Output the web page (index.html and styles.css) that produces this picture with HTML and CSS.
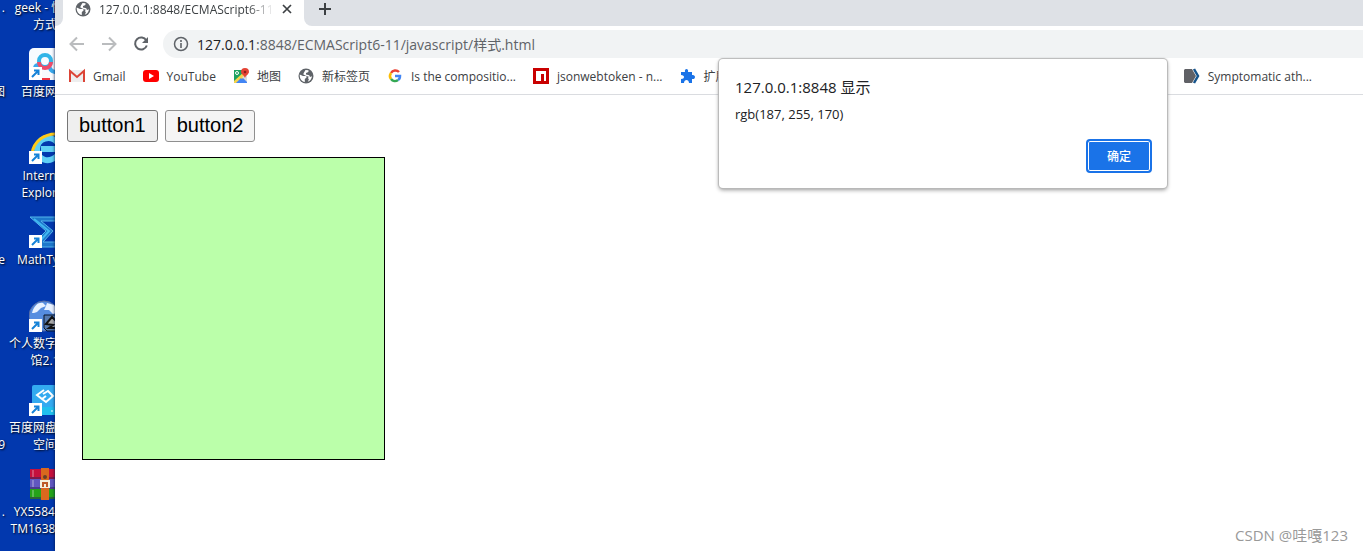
FILE: index.html
```html
<!DOCTYPE html>
<html lang="zh-CN">
<head>
    <meta charset="UTF-8">
    <meta name="viewport" content="width=device-width, initial-scale=1.0">
    <title>样式</title>
    <link rel="stylesheet" href="styles.css">
</head>
<body>
    <!-- Shared symbols -->
    <svg class="symbols" aria-hidden="true">
        <symbol id="globe" viewBox="0 0 16 16">
            <circle cx="8" cy="8" r="7.5" fill="#5f6368"/>
            <path d="M1.7 6.5 L5 8 L7.6 8 C8.6 8 9 9 8.3 9.7 L6.8 11 L6.8 14 C3.8 13.5 1.5 11 1.7 6.5 Z M7.5 2 L10.5 2.3 L10.4 4 L8 5 L8 6.4 L11.2 7.2 L12 9 L14 8.2 C13.8 10.8 12 13 9.7 13.7 L10.9 11.6 L10 10 L10.8 8.8 L7.2 7.4 L5.2 6.2 L6 4.5 Z" fill="#fff"/>
        </symbol>
        <symbol id="shortcut" viewBox="0 0 13 13">
            <path d="M0 0H13V13H0Z" fill="#fff"/>
            <path d="M3 10L9 4M5 3.5H9.5V8" fill="none" stroke="#1683d8" stroke-width="2"/>
        </symbol>
    </svg>

    <div class="desktop">
        <div class="edge"><span>.</span></div>
        <div class="shortcut">
            <svg width="32" height="32"></svg>
            <span>geek - 快捷<br>方式</span>
        </div>

        <div class="edge"><span>图</span></div>
        <div class="shortcut">
            <svg width="32" height="32" viewBox="0 0 32 32">
                <rect width="32" height="32" rx="5" fill="#f8fbff"/>
                <path d="M10 17C5 17 5 22 8 24M20 17C21 25 29 26 31 20" fill="none" stroke="#3aa9ed" stroke-width="4"/>
                <circle cx="16" cy="13" r="6" fill="none" stroke="#32b5e8" stroke-width="4"/>
                <path d="M10 14A6 6 0 0 0 22 14M12 18L10 21" fill="none" stroke="#ee4c6b" stroke-width="4"/>
                <path d="M13 30H21V32H13Z" fill="#ef3340"/>
                <use href="#shortcut" x="0" y="19" width="13" height="13"/>
            </svg>
            <span>百度网盘</span>
        </div>

        <div class="edge"></div>
        <div class="shortcut">
            <svg width="32" height="32" viewBox="0 0 32 32">
                <path d="M30 17H12M29 23C19 33 8 27 8 17C8 6 22 2 29 11" fill="none" stroke="#5fd0f6" stroke-width="6"/>
                <path d="M3 22C4 10 15 1 29 2" fill="none" stroke="#ffcb18" stroke-width="3"/>
                <use href="#shortcut" x="0" y="19" width="13" height="13"/>
            </svg>
            <span>Internet<br>Explorer</span>
        </div>

        <div class="edge"><span>e</span></div>
        <div class="shortcut">
            <svg width="32" height="32" viewBox="0 0 32 32">
                <path d="M1 1H32V5H12L24 15L14 26H32V31H5V27L17 15Z" fill="#1d77cb" stroke="#55b6ed"/>
                <path d="M5 3L20 15L11 25" fill="none" stroke="#3fb7f1" stroke-width="2"/>
                <use href="#shortcut" x="0" y="19" width="13" height="13"/>
            </svg>
            <span>MathType</span>
        </div>

        <div class="edge"></div>
        <div class="shortcut">
            <svg width="32" height="32" viewBox="0 0 32 32">
                <circle cx="15" cy="16" r="15" fill="#568de0" stroke="#5a6da3"/>
                <path d="M3 13C5 5 10 2 14 3L17 6L12 8L8 12L5 13ZM18 3L25 5L29 12L24 14L20 10L15 10L17 6Z" fill="#e8f1ff"/>
                <path d="M15 15H32V31H18L15 28Z" fill="#5579ad" stroke="#07152c"/>
                <path d="M17 24L23 17L28 22L32 22V28H20L24 25Z" fill="#aaa" stroke="#111" stroke-width="2"/>
                <use href="#shortcut" x="0" y="19" width="13" height="13"/>
            </svg>
            <span>个人数字图书<br>馆2.1</span>
        </div>

        <div class="edge"><span><br>9</span></div>
        <div class="shortcut">
            <svg width="32" height="32" viewBox="0 0 32 32">
                <rect x="3" y="1" width="29" height="23" rx="2" fill="#33aaf0"/>
                <rect x="3" y="23" width="29" height="8" fill="#20bfee"/>
                <path d="M15 6L8 11L13 15L17 12M14 10L19 7L24 12L17 18L13 15" fill="none" stroke="#fff" stroke-width="2"/>
                <path d="M22 27H24M26 27H28" stroke="#fff"/>
                <use href="#shortcut" x="0" y="19" width="13" height="13"/>
            </svg>
            <span>百度网盘同步<br>空间</span>
        </div>

        <div class="edge"><span>.</span></div>
        <div class="shortcut">
            <svg width="32" height="32" viewBox="0 0 32 32">
                <rect x="1" y="1" width="31" height="10" fill="#c5103d"/>
                <rect x="1" y="11" width="31" height="10" fill="#6157c0"/>
                <rect x="1" y="21" width="31" height="10" fill="#25a319"/>
                <path d="M1 10H32M1 20H32M1 30H32" stroke="#322559"/>
                <path d="M4 2V9M4 12V19M4 22V29" stroke="#fff" opacity=".5"/>
                <rect x="12" y="0" width="8" height="32" fill="#d9681e"/>
                <circle cx="16" cy="9" r="2" fill="#674029"/>
                <rect x="11" y="12" width="10" height="8" fill="#f4efdc"/>
                <path d="M14 19V15H18V19" fill="none" stroke="#bd5926" stroke-width="2"/>
            </svg>
            <span>YX5584-TM<br>TM1638程序</span>
        </div>
    </div>

    <div class="browser">
        <div class="tab-strip">
            <div class="prev-tab"></div>
            <div class="tab">
                <svg width="16" height="16"><use href="#globe"/></svg>
                <span class="tab-title">127.0.0.1:8848/ECMAScript6-11/javascript</span>
                <button class="icon-button" aria-label="关闭">
                    <svg width="10" height="10" viewBox="0 0 10 10"><path d="M1 1L9 9M9 1L1 9" stroke="#3c4043" stroke-width="1.7"/></svg>
                </button>
            </div>
            <div class="new-tab">
                <button class="icon-button" aria-label="新标签页">
                    <svg width="12" height="12" viewBox="0 0 12 12"><path d="M6 0V12M0 6H12" stroke="#3c4043" stroke-width="2"/></svg>
                </button>
            </div>
        </div>

        <div class="toolbar">
            <button class="icon-button" aria-label="后退">
                <svg width="16" height="16" viewBox="0 0 16 16"><path d="M15 8H2M8 1.5L1.5 8L8 14.5" fill="none" stroke="#babcbe" stroke-width="2"/></svg>
            </button>
            <button class="icon-button" aria-label="前进">
                <svg width="16" height="16" viewBox="0 0 16 16"><path d="M1 8H14M8 1.5L14.5 8L8 14.5" fill="none" stroke="#babcbe" stroke-width="2"/></svg>
            </button>
            <button class="icon-button" aria-label="重新加载">
                <svg width="16" height="16" viewBox="0 0 16 16"><path d="M13.3 4.5A6 6 0 1 0 13.8 9.5" fill="none" stroke="#5f6368" stroke-width="2"/><path d="M15 1V7H9Z" fill="#5f6368"/></svg>
            </button>
            <div class="address">
                <svg width="16" height="16" viewBox="0 0 16 16"><circle cx="8" cy="8" r="6.5" fill="none" stroke="#5f6368" stroke-width="1.5"/><path d="M8 7V12M8 4V6" stroke="#5f6368" stroke-width="1.6"/></svg>
                <span><b>127.0.0.1</b>:8848/ECMAScript6-11/javascript/样式.html</span>
            </div>
        </div>

        <nav class="bookmarks">
            <a href="#">
                <svg width="16" height="16" viewBox="0 0 16 16"><path d="M1 2H15V14H1Z" fill="#eee"/><path d="M1 14V3L8 9L15 3V14" fill="none" stroke="#dc4436" stroke-width="2"/></svg>
                Gmail
            </a>
            <a href="#">
                <svg width="16" height="16" viewBox="0 0 16 16"><rect y="2" width="16" height="12" rx="3" fill="#f00"/><path d="M6 5L11 8L6 11Z" fill="#fff"/></svg>
                YouTube
            </a>
            <a href="#">
                <svg width="16" height="16" viewBox="0 0 16 16">
                    <path d="M1 2H14V15H1Z" fill="#4285f4"/>
                    <path d="M1 2H11L13 5L1 15Z" fill="#1ba261"/>
                    <path d="M1 13L12 3L15 6L4 15H1Z" fill="#f5d34b"/>
                    <path d="M3 15L8 10L13 15Z" fill="#4285f4"/>
                    <path d="M9 9L14 14V7Z" fill="#ddd"/>
                    <path d="M12 10C11 7 8 6 8 4A4 4 0 0 1 16 4C16 6 13 7 12 10Z" fill="#e44335"/>
                    <circle cx="12" cy="4" r="1.3" fill="#8b2118"/>
                    <circle cx="4" cy="5" r="1.5" fill="none" stroke="#fff"/>
                </svg>
                地图
            </a>
            <a href="#">
                <svg width="16" height="16"><use href="#globe"/></svg>
                新标签页
            </a>
            <a href="#">
                <svg width="16" height="16" viewBox="0 0 16 16" fill="none" stroke-width="2.5">
                    <path d="M12 4A5 5 0 0 0 4 5" stroke="#ea4335"/>
                    <path d="M4 5A5 5 0 0 0 4 11" stroke="#fbbc05"/>
                    <path d="M4 11A5 5 0 0 0 11 12" stroke="#34a853"/>
                    <path d="M11 12Q13 11 13 8H8" stroke="#4285f4"/>
                </svg>
                Is the compositio...
            </a>
            <a href="#">
                <svg width="16" height="16" viewBox="0 0 16 16"><path d="M0 0H16V16H0Z" fill="#c90000"/><path d="M3 3H13V13H11V6H8V13H3Z" fill="#fff"/></svg>
                jsonwebtoken - n...
            </a>
            <a href="#">
                <svg width="16" height="16" viewBox="0 0 16 16"><path d="M1 4H5C4 0 9 0 8 4H12V7C16 6 16 12 12 11V15H9C9 11 4 11 4 15H1V11C5 11 5 7 1 7Z" fill="#1a73e8"/></svg>
                扩展
            </a>
            <a href="#" class="last">
                <svg width="16" height="16" viewBox="0 0 16 16"><path d="M0 2L1 1H8L12 8L8 15H1L0 14Z" fill="#606166"/><path d="M10 1L14 8L10 15" fill="none" stroke="#16548b" stroke-width="2.5"/></svg>
                Symptomatic ath...
            </a>
        </nav>

        <main class="page">
            <div class="page-buttons">
                <button>button1</button>
                <button class="light">button2</button>
            </div>
            <div class="box"></div>
        </main>

        <div class="alert" role="alertdialog" aria-labelledby="alert-title" aria-describedby="alert-text">
            <h1 id="alert-title">127.0.0.1:8848 显示</h1>
            <p id="alert-text">rgb(187, 255, 170)</p>
            <button>确定</button>
        </div>

        <div class="watermark">CSDN @哇嘎123</div>
    </div>
</body>
</html>
```

FILE: styles.css
```css
* {
    box-sizing: border-box;
}

body {
    margin: 0;
    min-height: 100vh;
    display: flex;
    overflow: hidden;
    background-color: #0238ae;
    font-family: "Open Sans", "Noto Sans CJK SC", sans-serif;
    font-size: 12px;
    color: #3c4043;
}

button {
    font-family: inherit;
}

svg {
    display: block;
    flex-shrink: 0;
}

.symbols {
    position: absolute;
    width: 0;
    height: 0;
}

/* Desktop icons */
.desktop {
    flex: 0 0 55px;
    min-width: 0;
    height: 100vh;
    margin-top: -36px;
    display: grid;
    grid-template-columns: 5px 76px;
    grid-auto-rows: 84px;
    column-gap: 2px;
    color: #fff;
    line-height: 17px;
    text-shadow: 1px 1px 2px #000;
}

.shortcut {
    display: flex;
    flex-direction: column;
    align-items: center;
    gap: 3px;
    text-align: center;
    white-space: nowrap;
}

.edge {
    display: flex;
    justify-content: flex-end;
    padding-top: 35px;
}

/* Browser window */
.browser {
    position: relative;
    flex: 1;
    min-width: 0;
    min-height: 100vh;
    background-color: #fff;
    box-shadow: 0 0 3px #001642;
}

.tab-strip {
    display: flex;
    height: 26px;
    background-color: #fff;
}

.prev-tab {
    width: 8px;
    background-color: #dee1e6;
    border-bottom-right-radius: 8px;
}

.tab {
    display: flex;
    align-items: center;
    gap: 8px;
    width: 241px;
    padding: 0 12px;
    padding-bottom: 8px;
}

.tab-title {
    flex: 1;
    overflow: hidden;
    white-space: nowrap;
    mask-image: linear-gradient(to right, #000 85%, transparent);
}

.new-tab {
    flex: 1;
    display: flex;
    align-items: center;
    padding: 0 15px 8px;
    background-color: #dee1e6;
    border-bottom-left-radius: 8px;
}

.icon-button {
    padding: 0;
    border: none;
    background: none;
}

.toolbar {
    display: flex;
    align-items: center;
    gap: 16px;
    height: 32px;
    padding: 4px 0 0 14px;
}

.address {
    flex: 1;
    display: flex;
    align-items: center;
    gap: 8px;
    height: 28px;
    margin-left: -2px;
    padding-left: 10px;
    border-radius: 14px 0 0 14px;
    background-color: #f1f3f4;
    color: #5f6368;
    font-size: 14px;
}

.address b {
    font-weight: normal;
    color: #202124;
}

.bookmarks {
    display: flex;
    align-items: center;
    gap: 17px;
    height: 37px;
    padding: 0 51px 0 14px;
    border-bottom: 1px solid #dadce0;
}

.bookmarks a {
    display: flex;
    align-items: center;
    gap: 8px;
    color: #3c4043;
    text-decoration: none;
    white-space: nowrap;
}

.bookmarks .last {
    margin-left: auto;
}

/* Page content */
.page {
    padding: 15px 12px;
}

.page-buttons {
    display: flex;
    gap: 7px;
}

.page-buttons button {
    height: 32px;
    padding: 0 11px 2px;
    border: 1px solid #767676;
    border-radius: 3px;
    background-color: #efefef;
    color: #000;
    font-family: "Liberation Sans", Arial, sans-serif;
    font-size: 20px;
    line-height: 28px;
}

.page-buttons .light {
    border-color: #8f8f8f;
    background-color: #f5f5f5;
}

.box {
    width: 303px;
    height: 303px;
    margin: 15px;
    border: 1px solid #000;
    background-color: #bbffaa;
}

/* Alert */
.alert {
    position: absolute;
    top: 59px;
    right: 196px;
    display: flex;
    flex-direction: column;
    width: 448px;
    padding: 16px 15px 15px 16px;
    border-radius: 4px;
    background-color: #fff;
    box-shadow: 0 0 1px 1px #b8b8b8, 0 2px 4px rgba(0, 0, 0, 0.4);
    color: #202124;
}

.alert h1 {
    margin: 0;
    font-size: 15px;
    font-weight: normal;
    line-height: 24px;
}

.alert p {
    margin: 4px 0 14px;
    font-size: 13px;
    line-height: 22px;
}

.alert button {
    align-self: flex-end;
    width: 66px;
    height: 34px;
    border: 2px solid #1a73e8;
    border-radius: 4px;
    background-color: #1a73e8;
    box-shadow: inset 0 0 0 1px #fff;
    color: #fff;
    font-size: 12px;
    font-weight: 500;
}

.watermark {
    position: absolute;
    right: 15px;
    bottom: 6px;
    color: #999;
    font-size: 15px;
    line-height: 20px;
}
```
